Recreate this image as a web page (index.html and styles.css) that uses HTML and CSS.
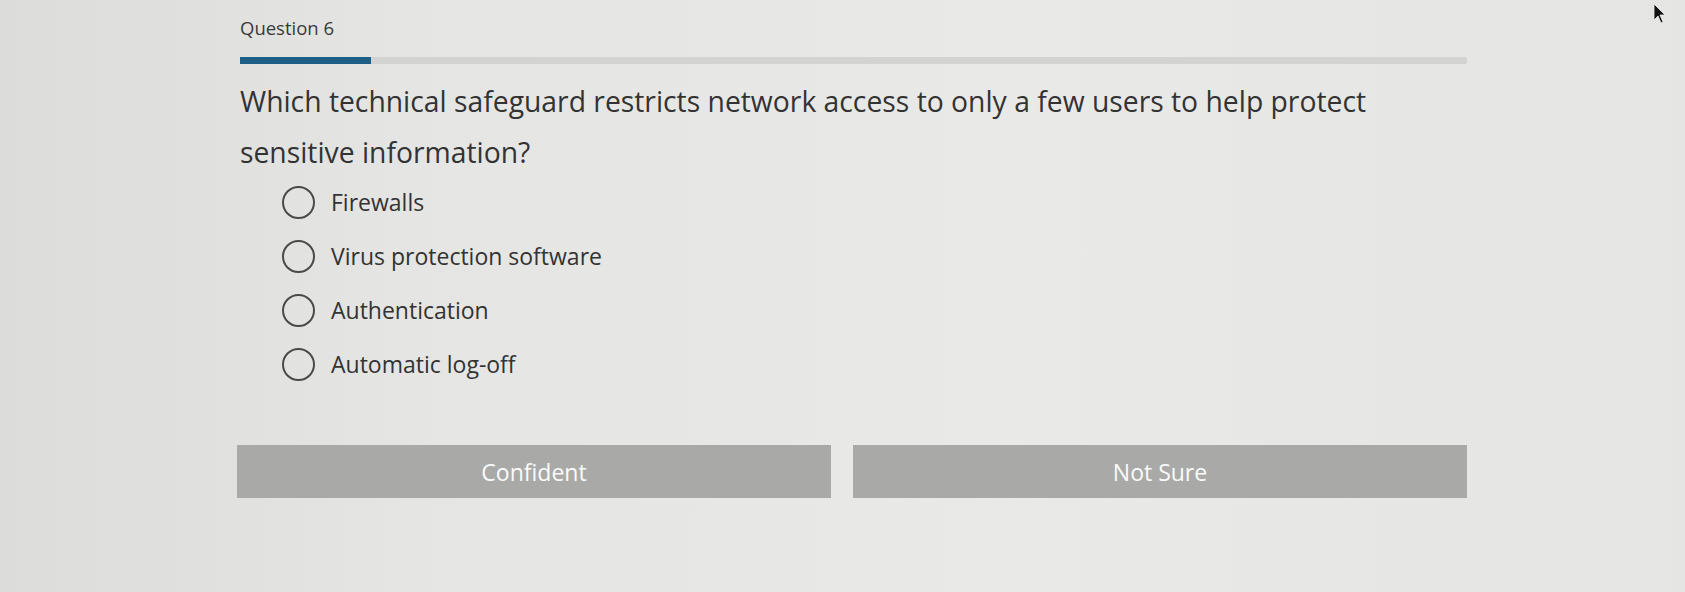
FILE: index.html
```html
<!DOCTYPE html>
<html lang="en">
<head>
<meta charset="utf-8">
<title>Question 6</title>
<link rel="stylesheet" href="styles.css">
</head>
<body>
<main class="page">
  <div class="q-label">Question 6</div>
  <div class="progress">
    <div class="progress-fill"></div>
  </div>
  <p class="q-text">Which technical safeguard restricts network access to only a few users to help protect sensitive information?</p>
  <ul class="options">
    <li class="option"><span class="radio"></span><span class="opt-text">Firewalls</span></li>
    <li class="option"><span class="radio"></span><span class="opt-text">Virus protection software</span></li>
    <li class="option"><span class="radio"></span><span class="opt-text">Authentication</span></li>
    <li class="option"><span class="radio"></span><span class="opt-text">Automatic log-off</span></li>
  </ul>
  <div class="buttons">
    <button class="btn btn-confident">Confident</button>
    <button class="btn btn-unsure">Not Sure</button>
  </div>
</main>
<svg class="cursor" width="13" height="22" viewBox="0 0 13 22"><path d="M1 1 L1 17 L5 13 L8 20 L10 19 L7 12 L12 12 Z" fill="#111" stroke="#eee" stroke-width="0.8"/></svg>
</body>
</html>
```
FILE: styles.css
```css
html, body {
  margin: 0;
  padding: 0;
}
body {
  width: 1685px;
  height: 592px;
  overflow: hidden;
  background: linear-gradient(90deg, #dcdddb 0%, #e5e6e4 25%, #e9eae8 60%, #e5e6e4 100%);
  font-family: "Open Sans", "Noto Sans", sans-serif;
  color: #333;
  position: relative;
}
.page {
  padding: 16px 0 0 240px;
  width: 1227px;
}
.q-label {
  font-size: 18.5px;
  line-height: 23px;
  color: #3a3a3a;
}
.progress {
  margin-top: 18px;
  height: 7px;
  background: #d3d4d2;
  border-radius: 2px;
}
.progress-fill {
  width: 131px;
  height: 7px;
  background: #1d6087;
}
.q-text {
  margin: 12px 0 0;
  max-width: 1160px;
  font-size: 28.3px;
  line-height: 51px;
  color: #333;
}
.options {
  list-style: none;
  margin: -3px 0 0;
  padding: 0 0 0 42px;
}
.option {
  height: 54px;
  display: flex;
  align-items: center;
  gap: 16px;
}
.radio {
  width: 29px;
  height: 29px;
  border: 2.5px solid #4a4a4a;
  border-radius: 50%;
  flex: none;
}
.opt-text {
  font-size: 23px;
  color: #333;
}
.buttons {
  margin-top: 54px;
  display: flex;
  gap: 22px;
  margin-left: -3px;
}
.btn {
  height: 53px;
  border: none;
  background: #a9aaa8;
  color: #fafafa;
  font-family: "Open Sans", "Noto Sans", sans-serif;
  font-size: 23px;
  padding: 0;
}
.btn-confident {
  flex: 594 1 0;
}
.btn-unsure {
  flex: 614 1 0;
}
.cursor {
  position: absolute;
  left: 1653px;
  top: 3px;
}
```
